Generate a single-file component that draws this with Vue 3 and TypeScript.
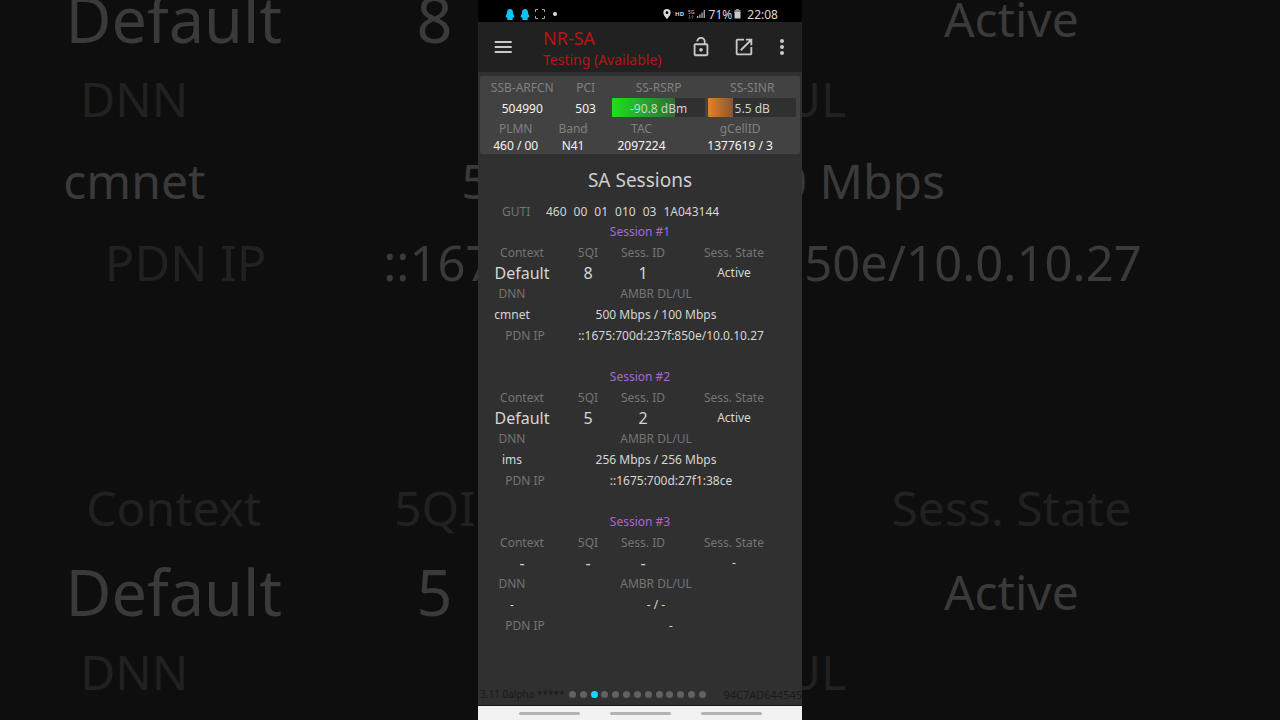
<script setup lang="ts">
import { ref } from 'vue'

interface Session {
  id: number
  context: string
  qi: string
  sessId: string
  state: string
  dnn: string
  ambr: string
  ip: string
}

interface BackdropRow {
  layout: 'four' | 'pair' | 'address' | 'blank'
  tone: 'label' | 'value'
  cells: { text: string; large?: boolean; label?: boolean }[]
}

const guti: string[] = ['460', '00', '01', '010', '03', '1A043144']

const sessions: Session[] = [
  { id: 1, context: 'Default', qi: '8', sessId: '1', state: 'Active', dnn: 'cmnet', ambr: '500 Mbps / 100 Mbps', ip: '::1675:700d:237f:850e/10.0.10.27' },
  { id: 2, context: 'Default', qi: '5', sessId: '2', state: 'Active', dnn: 'ims', ambr: '256 Mbps / 256 Mbps', ip: '::1675:700d:27f1:38ce' },
  { id: 3, context: '-', qi: '-', sessId: '-', state: '-', dnn: '-', ambr: '- / -', ip: '-' },
]

const backdrop: BackdropRow[] = [
  { layout: 'four', tone: 'value', cells: [{ text: 'Default', large: true }, { text: '8', large: true }, { text: '' }, { text: 'Active' }] },
  { layout: 'pair', tone: 'label', cells: [{ text: 'DNN' }, { text: 'AMBR DL/UL' }] },
  { layout: 'pair', tone: 'value', cells: [{ text: 'cmnet' }, { text: '500 Mbps / 100 Mbps' }] },
  { layout: 'address', tone: 'value', cells: [{ text: 'PDN IP', label: true }, { text: '::1675:700d:237f:850e/10.0.10.27' }] },
  { layout: 'blank', tone: 'label', cells: [] },
  { layout: 'blank', tone: 'label', cells: [] },
  { layout: 'four', tone: 'label', cells: [{ text: 'Context' }, { text: '5QI' }, { text: '' }, { text: 'Sess. State' }] },
  { layout: 'four', tone: 'value', cells: [{ text: 'Default', large: true }, { text: '5', large: true }, { text: '' }, { text: 'Active' }] },
  { layout: 'pair', tone: 'label', cells: [{ text: 'DNN' }, { text: 'AMBR DL/UL' }] },
  { layout: 'blank', tone: 'label', cells: [] },
]

const pageCount = 13
const page = ref(3)
const rsrp = 68
const sinr = 28
</script>

<template>
  <div class="stage">
    <div class="backdrop" aria-hidden="true">
      <div v-for="(row, r) in backdrop" :key="r" class="brow" :class="[row.layout, row.tone]">
        <span v-for="(cell, c) in row.cells" :key="c" :class="{ large: cell.large, dim: cell.label }">{{ cell.text }}</span>
      </div>
    </div>

    <main class="phone">
      <div class="status">
        <div class="status-left">
          <svg v-for="n in 2" :key="n" class="penguin" viewBox="0 0 10 11">
            <path d="M5 0C3 0 2 1.500 2 3.500V4.500C1.200 5.600.5 7 .7 8.300c.1.5.7.2 1-.3.2.7.5 1.100.9 1.500-.7.4-.7 1.300.3 1.500h4.200c1-.2 1-1.100.3-1.500.4-.4.700-.8.9-1.500.3.5.9.8 1 .3C9.500 7 8.800 5.600 8 4.500V3.500C8 1.500 7 0 5 0z" />
          </svg>
          <svg class="frame" viewBox="0 0 10 10">
            <path d="M.5 3V.5H3M7 .5h2.500V3M9.500 7v2.500H7M3 9.500H.5V7" />
          </svg>
          <i class="dot"></i>
        </div>
        <div class="status-right">
          <svg class="pin" viewBox="0 0 8 10">
            <path fill-rule="evenodd" d="M4 0a3.700 3.700 0 0 0-3.700 3.700C.3 6.300 4 10 4 10s3.700-3.700 3.700-6.300A3.700 3.700 0 0 0 4 0zm0 2.300a1.400 1.400 0 1 1 0 2.800 1.400 1.400 0 0 1 0-2.800z" />
          </svg>
          <span class="hd">HD</span>
          <span class="net">
            <span>5G</span>
            <svg viewBox="0 0 6 4"><path d="M1.500 0v3.500M.5 2.500l1 1 1-1M4.500 4V.5M3.500 1.500l1-1 1 1" /></svg>
          </span>
          <svg class="signal" viewBox="0 0 8 8">
            <path d="M0 6h1.300v2H0zM2.200 4.500h1.300V8H2.200zM4.400 2.500h1.300V8H4.400zM6.600 0h1.300v8H6.600z" />
          </svg>
          <span class="percent">71%</span>
          <svg class="battery" viewBox="0 0 7 10">
            <path fill="#8a8a8a" d="M2 0h3v1h1.500v3h-6V1H2z" />
            <path d="M.5 3h6v6.500h-6z" />
          </svg>
          <time class="clock">22:08</time>
        </div>
      </div>

      <header class="appbar">
        <button type="button" class="icon" aria-label="Menu">
          <svg viewBox="0 0 24 24"><path d="M3 5.500h18.500v2.200H3zM3 10.900h18.500v2.200H3zM3 16.300h18.500v2.200H3z" /></svg>
        </button>
        <div class="titles">
          <h1>NR-SA</h1>
          <p>Testing (Available)</p>
        </div>
        <button type="button" class="icon" aria-label="Unlock">
          <svg viewBox="0 0 24 24"><path d="M12 17c1.100 0 2-.9 2-2s-.9-2-2-2-2 .9-2 2 .9 2 2 2zm6-9h-1V6c0-2.760-2.240-5-5-5S7 3.240 7 6h1.900c0-1.710 1.390-3.100 3.100-3.100s3.100 1.390 3.100 3.100v2H6c-1.100 0-2 .9-2 2v10c0 1.100.9 2 2 2h12c1.100 0 2-.9 2-2V10c0-1.100-.9-2-2-2zm0 12H6V10h12v10z" /></svg>
        </button>
        <button type="button" class="icon" aria-label="Open in new window">
          <svg viewBox="0 0 24 24"><path d="M19 19H5V5h7V3H5c-1.110 0-2 .9-2 2v14c0 1.100.89 2 2 2h14c1.100 0 2-.9 2-2v-7h-2v7zM14 3v2h3.590l-9.830 9.830 1.410 1.410L19 6.410V10h2V3h-7z" /></svg>
        </button>
        <button type="button" class="icon more" aria-label="More options">
          <svg viewBox="6 0 12 24"><circle cx="12" cy="5.500" r="2.200" /><circle cx="12" cy="12" r="2.200" /><circle cx="12" cy="18.500" r="2.200" /></svg>
        </button>
      </header>

      <section class="card" aria-label="Serving cell">
        <dl class="cells upper">
          <div><dt>SSB-ARFCN</dt><dd>504990</dd></div>
          <div><dt>PCI</dt><dd>503</dd></div>
          <div class="metric"><dt>SS-RSRP</dt><dd class="bar"><i class="fill green" :style="{ width: rsrp + '%' }"></i><span>-90.8 dBm</span></dd></div>
          <div class="metric last"><dt>SS-SINR</dt><dd class="bar"><i class="fill orange" :style="{ width: sinr + '%' }"></i><span>5.5 dB</span></dd></div>
        </dl>
        <dl class="cells lower">
          <div><dt>PLMN</dt><dd>460 / 00</dd></div>
          <div><dt>Band</dt><dd>N41</dd></div>
          <div><dt>TAC</dt><dd>2097224</dd></div>
          <div><dt>gCellID</dt><dd>1377619 / 3</dd></div>
        </dl>
      </section>

      <h2>SA Sessions</h2>
      <div class="guti">
        <span class="guti-label">GUTI</span>
        <span v-for="(part, i) in guti" :key="i">{{ part }}</span>
      </div>

      <div class="sessions">
        <section v-for="s in sessions" :key="s.id" class="session">
          <h3>Session #{{ s.id }}</h3>
          <dl class="four">
            <div><dt>Context</dt><dd class="large">{{ s.context }}</dd></div>
            <div><dt>5QI</dt><dd class="large">{{ s.qi }}</dd></div>
            <div><dt>Sess. ID</dt><dd class="large">{{ s.sessId }}</dd></div>
            <div><dt>Sess. State</dt><dd>{{ s.state }}</dd></div>
          </dl>
          <dl class="pair">
            <div><dt>DNN</dt><dd>{{ s.dnn }}</dd></div>
            <div><dt>AMBR DL/UL</dt><dd>{{ s.ambr }}</dd></div>
          </dl>
          <dl class="address">
            <dt>PDN IP</dt>
            <dd>{{ s.ip }}</dd>
          </dl>
        </section>
      </div>

      <footer class="footer">
        <span class="build">3.11.0alpha *****</span>
        <div class="dots">
          <button v-for="n in pageCount" :key="n" type="button" :class="{ on: n === page }" :aria-label="`Page ${n}`" @click="page = n"></button>
        </div>
        <span class="device">94C7AD644545</span>
      </footer>

      <nav class="navbar" aria-label="System navigation">
        <button type="button" aria-label="Recent apps"></button>
        <button type="button" aria-label="Home"></button>
        <button type="button" aria-label="Back"></button>
      </nav>
    </main>
  </div>
</template>

<style>
body {
  margin: 0;
  background: #0e0e0e;
}
</style>

<style scoped>
.stage {
  position: relative;
  display: flex;
  justify-content: center;
  height: 100vh;
  overflow: hidden;
  background: #0e0e0e;
  font-family: "Noto Sans", "Open Sans", sans-serif;
  font-size: 12px;
}

h1, h2, h3, p, dl, dd {
  margin: 0;
  font-weight: 400;
}

button {
  padding: 0;
  border: 0;
  background: none;
  cursor: pointer;
}

svg {
  display: block;
  fill: currentColor;
}

.four {
  display: grid;
  grid-template-columns: minmax(0, 88fr) minmax(0, 44fr) minmax(0, 66fr) minmax(0, 116fr) minmax(0, 10fr);
}

.pair {
  display: grid;
  grid-template-columns: minmax(0, 68fr) minmax(0, 220fr) minmax(0, 36fr);
}

.address {
  display: grid;
  grid-template-columns: minmax(0, 94fr) minmax(0, 198fr) minmax(0, 32fr);
}

/* enlarged copy of the list behind the phone */
.backdrop {
  position: absolute;
  inset: -24px 0 -74px;
  display: grid;
  grid-template-rows: repeat(10, minmax(0, 1fr));
  font-size: 48px;
  white-space: nowrap;
}

.brow {
  align-items: center;
  color: #3a3a3a;
}

.brow span {
  display: flex;
  justify-content: center;
}

.brow.label,
.brow .dim {
  color: #212121;
}

.brow .large {
  font-size: 63px;
}

.brow.address {
  font-size: 49px;
}

.phone {
  position: relative;
  display: flex;
  flex-direction: column;
  aspect-ratio: 9 / 20;
  height: 100%;
  overflow: hidden;
  background: #303030;
  color: #d6d6d6;
  white-space: nowrap;
}

.status {
  display: flex;
  align-items: center;
  justify-content: space-between;
  height: 22px;
  padding: 6px 24px 0 27px;
  box-sizing: border-box;
  background: #000;
  color: #d8d8d8;
}

.status-left,
.status-right {
  display: flex;
  align-items: center;
}

.status-left {
  gap: 5px;
}

.penguin {
  width: 10px;
  height: 11px;
  color: #08c4f4;
}

.frame {
  width: 10px;
  height: 10px;
  fill: none;
  stroke: #a8a8a8;
}

.dot {
  width: 4px;
  height: 4px;
  margin-left: 3px;
  border-radius: 50%;
  background: #e0e0e0;
}

.status-right {
  gap: 4px;
}

.pin {
  width: 8px;
  height: 10px;
}

.hd {
  font-size: 6px;
  font-weight: 700;
}

.net {
  display: flex;
  flex-direction: column;
  align-items: center;
  font-size: 5px;
  line-height: 5px;
}

.net svg {
  width: 6px;
  height: 4px;
  fill: none;
  stroke: #707070;
  stroke-width: 0.7;
}

.signal {
  width: 8px;
  height: 8px;
  margin-left: -2px;
  color: #b0b0b0;
}

.battery {
  width: 7px;
  height: 10px;
  margin-left: -2px;
  color: #c8c8c8;
}

.clock {
  margin-left: 2px;
}

.percent,
.clock {
  padding-top: 2px;
  line-height: 14px;
}

.appbar {
  display: flex;
  align-items: center;
  gap: 21px;
  height: 50px;
  padding: 0 14px;
  background: #212121;
  color: #c9c9c9;
}

.icon {
  width: 22px;
  height: 22px;
  color: inherit;
}

.icon svg {
  width: 100%;
  height: 100%;
}

.more {
  width: 12px;
}

.titles {
  flex: 1;
  padding: 4px 0 0 8px;
  color: #b81414;
}

.titles h1 {
  font-size: 18px;
  line-height: 22px;
}

.titles p {
  font-size: 14px;
  line-height: 22px;
}

.card {
  margin: 4px 2px 0;
  border-radius: 2px;
  background: #424242;
}

.cells {
  display: grid;
  text-align: center;
}

.cells dt {
  color: #808080;
}

.cells dd {
  color: #f4f4f4;
}

.upper {
  grid-template-columns: minmax(0, 84fr) minmax(0, 42fr) minmax(0, 98fr) minmax(0, 94fr);
}

.upper dt {
  padding-top: 2px;
  line-height: 20px;
}

.upper dd {
  padding-top: 2px;
  line-height: 17px;
}

.lower {
  grid-template-columns: minmax(0, 71fr) minmax(0, 43fr) minmax(0, 93fr) minmax(0, 103fr) minmax(0, 8fr);
  padding-top: 4px;
}

.lower dt {
  line-height: 16px;
}

.lower dd {
  line-height: 17px;
}

.metric {
  padding-left: 5px;
}

.metric.last {
  padding: 0 4px 0 3px;
}

.bar {
  position: relative;
  overflow: hidden;
  border-radius: 1px;
  background: #303030;
}

.cells .bar {
  color: #d0d0d0;
}

.fill {
  position: absolute;
  inset: 0 auto 0 0;
}

.green {
  background: linear-gradient(90deg, #1fdf1f, #24a428 55%, #2c6e30);
}

.orange {
  background: linear-gradient(90deg, #e48128, #885530);
}

.bar span {
  position: relative;
}

h2 {
  padding-top: 13px;
  color: #cfcfcf;
  font-size: 19px;
  line-height: 26px;
  text-align: center;
}

.guti {
  display: flex;
  gap: 7px;
  margin-top: 8px;
  padding: 2px 0 0 24px;
  line-height: 18px;
}

.guti-label {
  flex: 0 0 37px;
  color: #747474;
}

.sessions {
  display: flex;
  flex: 1;
  flex-direction: column;
  text-align: center;
}

/* seven equal lines: title, two label/value pairs, address, spacer */
.session {
  display: grid;
  flex: 1;
  grid-template-rows: minmax(0, 1fr) minmax(0, 2fr) minmax(0, 2fr) minmax(0, 1fr) minmax(0, 1fr);
}

.session h3 {
  padding-top: 2px;
  color: #ac66d2;
  font-size: 12px;
  line-height: 18px;
}

.session dl > div {
  display: grid;
  grid-template-rows: repeat(2, minmax(0, 1fr));
}

.session dt,
.session dd {
  padding-top: 2px;
  line-height: 18px;
}

.session dt {
  color: #747474;
}

.session .large {
  font-size: 16px;
}

.footer {
  display: flex;
  align-items: center;
  padding: 32px 0 4px 2px;
  border-bottom: 1px solid #161616;
  line-height: 13px;
}

.build,
.device {
  color: #1a1a1a;
}

.build {
  flex: 89 1 0;
  font-size: 10px;
}

.device {
  flex: 96 1 0;
  font-size: 11px;
  text-align: right;
}

.dots {
  display: flex;
  justify-content: space-between;
  width: 137px;
}

.dots button {
  width: 7px;
  height: 7px;
  border-radius: 50%;
  background: #616161;
}

.dots .on {
  background: #18d8f8;
}

.navbar {
  display: flex;
  align-items: center;
  justify-content: center;
  gap: 30px;
  height: 14px;
  background: #f2f2f2;
}

.navbar button {
  width: 61px;
  height: 3px;
  border-radius: 2px;
  background: #b3b3b3;
}
</style>
